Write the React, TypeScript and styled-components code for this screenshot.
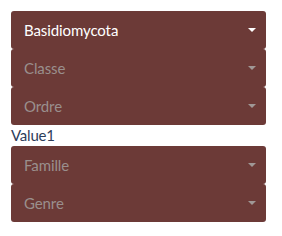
import React from "react";
import styled, { createGlobalStyle } from "styled-components";

const Global = createGlobalStyle`
  html, body { margin: 0; padding: 0; background: #ffffff; }
  body { font-family: Lato, "Noto Sans", sans-serif; }
`;

const Page = styled.div`
  padding: 11px 16px 0 11px;
  width: 255px;
`;

const Group = styled.div`
  display: flex;
  flex-direction: column;
`;

const Select = styled.div`
  height: 38px;
  box-sizing: border-box;
  background: #6c3a37;
  border-radius: 3px;
  display: flex;
  align-items: center;
  justify-content: space-between;
  padding: 0 10px 0 13px;
`;

const Text = styled.span<{ $selected?: boolean }>`
  font-size: 15px;
  letter-spacing: -0.1px;
  color: ${(p) => (p.$selected ? "#ffffff" : "#9a8f8d")};
`;

const Arrow = styled.span<{ $selected?: boolean }>`
  width: 0;
  height: 0;
  border-left: 4px solid transparent;
  border-right: 4px solid transparent;
  border-top: 4px solid ${(p) => (p.$selected ? "#ffffff" : "#a09896")};
`;

const Label = styled.div`
  font-size: 15px;
  color: #2d3d5a;
  height: 21px;
  line-height: 21px;
  letter-spacing: -0.2px;
`;

const Field = ({ text, selected }: { text: string; selected?: boolean }) => (
  <Select>
    <Text $selected={selected}>{text}</Text>
    <Arrow $selected={selected} />
  </Select>
);

export default function App() {
  return (
    <Page>
      <Global />
      <Group>
        <Field text="Basidiomycota" selected />
        <Field text="Classe" />
        <Field text="Ordre" />
      </Group>
      <Label>Value1</Label>
      <Group>
        <Field text="Famille" />
        <Field text="Genre" />
      </Group>
    </Page>
  );
}
